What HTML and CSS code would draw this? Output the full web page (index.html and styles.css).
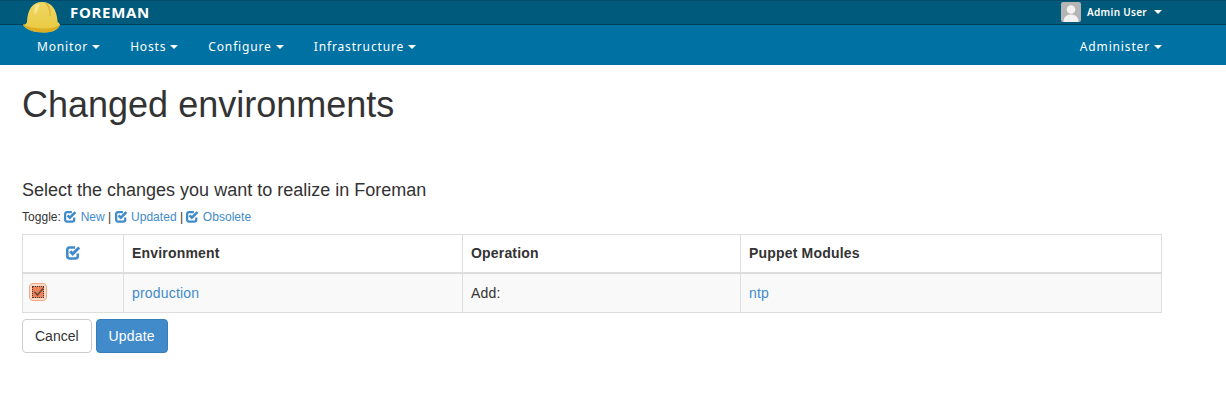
FILE: index.html
```html
<!DOCTYPE html>
<html lang="en">
<head>
<meta charset="utf-8">
<title>Changed environments</title>
<link rel="stylesheet" href="styles.css">
</head>
<body>
<svg class="defs" width="0" height="0" aria-hidden="true">
  <symbol id="chk" viewBox="0 0 14 14">
    <path d="M11 8v2.300A2.300 2.300 0 0 1 8.700 12.600H3.300A2.300 2.300 0 0 1 1.200 10.300V4.700A2.300 2.300 0 0 1 3.300 2.400H8.500" fill="none" stroke="currentColor" stroke-width="2.400"/>
    <path d="M3.800 5.800 6.300 8.300 12.300 2.300" fill="none" stroke="currentColor" stroke-width="2.800"/>
  </symbol>
</svg>
<header class="topbar">
  <div class="brand">
    <svg class="helmet" width="40" height="33" viewBox="0 0 40 33" aria-hidden="true">
      <defs>
        <linearGradient id="hat" x1="0" y1="0" x2="0" y2="1">
          <stop offset="0" stop-color="#efd765"/>
          <stop offset="1" stop-color="#eac93f"/>
        </linearGradient>
      </defs>
      <path d="M1 24.500C3 24.500 4.500 24 5 22 5.500 10 10 2 20 2 29 2 35 9 35.500 21.500L38 24.500C37 28 33 32.500 22 32.500 11 32.500 3 29 1 24.500Z" fill="url(#hat)"/>
      <path d="M1 24.500C6 27 13 28.500 22 28.500 30 28.500 35 27 38 24.500 37 28 33 32.500 22 32.500 11 32.500 3 29 1 24.500Z" fill="#dcae25"/>
      <path d="M14 4.500C12.500 8 12 11 12.500 14 15.500 13.500 16.500 7 18 3.500Z" fill="#f6e68f"/>
      <path d="M24 3C27.500 7 28.500 12 28 16" fill="none" stroke="#d8b32f" stroke-width="1.200"/>
    </svg>
    <span class="brand-name">FOREMAN</span>
  </div>
  <div class="user">
    <svg class="avatar" width="20" height="20" viewBox="0 0 20 20" aria-hidden="true">
      <rect width="20" height="20" rx="2" fill="#b5b5b5"/>
      <circle cx="10" cy="7.500" r="4.300" fill="#f2f2f2"/>
      <path d="M2.500 20C2.500 14.500 6 12.500 10 12.500S17.500 14.500 17.500 20Z" fill="#f2f2f2"/>
    </svg>
    <span class="user-name">Admin User</span>
    <i class="caret user-caret"></i>
  </div>
</header>
<nav class="mainnav">
  <ul class="navlist">
    <li>Monitor <i class="caret"></i></li>
    <li>Hosts <i class="caret"></i></li>
    <li>Configure <i class="caret"></i></li>
    <li>Infrastructure <i class="caret"></i></li>
  </ul>
  <div class="navright">Administer <i class="caret"></i></div>
</nav>
<main class="content">
  <h1>Changed environments</h1>
  <h4>Select the changes you want to realize in Foreman</h4>
  <p class="toggle">Toggle: <a href="#"><svg class="ic"><use href="#chk"/></svg> New</a> | <a href="#"><svg class="ic"><use href="#chk"/></svg> Updated</a> | <a href="#"><svg class="ic"><use href="#chk"/></svg> Obsolete</a></p>
  <table>
    <thead>
      <tr>
        <th class="c1"><a href="#"><svg class="ic ic-lg"><use href="#chk"/></svg></a></th>
        <th class="c2">Environment</th>
        <th class="c3">Operation</th>
        <th>Puppet Modules</th>
      </tr>
    </thead>
    <tbody>
      <tr>
        <td class="boxcell"><span class="box"><span class="boxin"><svg width="13" height="13" viewBox="0 0 13 13" aria-hidden="true"><path d="M2.500 6 5.500 9 11 2.500" fill="none" stroke="#6b4a3a" stroke-width="1.600"/></svg></span></span></td>
        <td><a href="#">production</a></td>
        <td>Add:</td>
        <td><a href="#">ntp</a></td>
      </tr>
    </tbody>
  </table>
  <div class="actions">
    <a class="btn" href="#">Cancel</a>
    <a class="btn primary" href="#">Update</a>
  </div>
</main>
</body>
</html>
```
FILE: styles.css
```css
* { box-sizing: border-box; }
html, body { margin: 0; }
body {
  font-family: "Liberation Sans", Arial, sans-serif;
  font-size: 14px;
  line-height: 20px;
  color: #333;
  background: #fff;
  overflow: hidden;
}
a { color: #428bca; text-decoration: none; }
.defs { position: absolute; }

.topbar {
  height: 25px;
  background: #005a7c;
  border-top: 1px solid #004d6b;
  border-bottom: 1px solid #00405a;
  display: flex;
  justify-content: space-between;
  align-items: center;
  padding: 0 64px 0 22px;
  color: #fff;
}
.brand { display: flex; align-items: center; position: relative; height: 100%; }
.helmet { position: absolute; left: 0; top: -1px; }
.brand-name {
  margin-left: 48px;
  font-family: "Noto Sans", sans-serif;
  font-size: 15px;
  font-weight: 700;
  letter-spacing: .7px;
  margin-top: -1px;
}
.user { display: flex; align-items: center; margin-top: -1px; }
.user-name {
  margin-left: 6px;
  font-family: "Noto Sans", sans-serif;
  font-size: 10px;
  font-weight: 600;
  letter-spacing: .3px;
}
.user-caret { margin-left: 7px; }
.caret {
  display: inline-block;
  width: 0;
  height: 0;
  border-left: 4px solid transparent;
  border-right: 4px solid transparent;
  border-top: 4.500px solid #fff;
  vertical-align: 2px;
}
.mainnav {
  height: 40px;
  background: #0071a3;
  display: flex;
  justify-content: space-between;
  align-items: center;
  padding: 3px 64px 0 37px;
  color: #fff;
  font-family: "Noto Sans", sans-serif;
  font-size: 12px;
  letter-spacing: .85px;
}
.navlist { display: flex; gap: 30px; list-style: none; margin: 0; padding: 0; }

.content { padding: 0 22px; }
h1 {
  margin: 20px 0 0;
  font-size: 36px;
  line-height: 40px;
  font-weight: 500;
}
h4 {
  margin: 55px 0 0;
  font-size: 18px;
  line-height: 20px;
  font-weight: 500;
}
.toggle { margin: 8px 0 0; font-size: 12px; line-height: 18px; letter-spacing: .03px; }
.ic { width: 13px; height: 13px; vertical-align: -2px; }
.ic-lg { width: 15px; height: 15px; vertical-align: -2px; }
table {
  margin-top: 8px;
  width: 1140px;
  table-layout: fixed;
  border-collapse: collapse;
  border: 1px solid #ddd;
}
th, td { border: 1px solid #ddd; padding: 8px; text-align: left; vertical-align: middle; letter-spacing: .18px; }
th { height: 38px; border-bottom-width: 2px; font-weight: 700; }
td { height: 40px; background: #f9f9f9; }
.c1 { width: 101px; text-align: center; }
.c2 { width: 339px; }
.c3 { width: 278px; }
.boxcell { padding: 0 6px 1px; }
.box {
  display: block;
  width: 18px;
  height: 18px;
  padding: 2px;
  background: #fcdccb;
  border: 1px solid #f4a582;
  border-radius: 4px;
}
.boxin {
  display: block;
  width: 12px;
  height: 12px;
  background: #ec8259;
  border: 1px dotted #4a3a34;
}
.boxin svg { display: block; margin: -1px; }
.actions { display: flex; gap: 4px; margin-top: 6px; }
.btn {
  display: block;
  padding: 6px 12px;
  height: 34px;
  border: 1px solid #ccc;
  border-radius: 4px;
  color: #333;
  background: #fff;
}
.primary { background: #428bca; border-color: #357ebd; color: #fff; letter-spacing: .15px; }
```
